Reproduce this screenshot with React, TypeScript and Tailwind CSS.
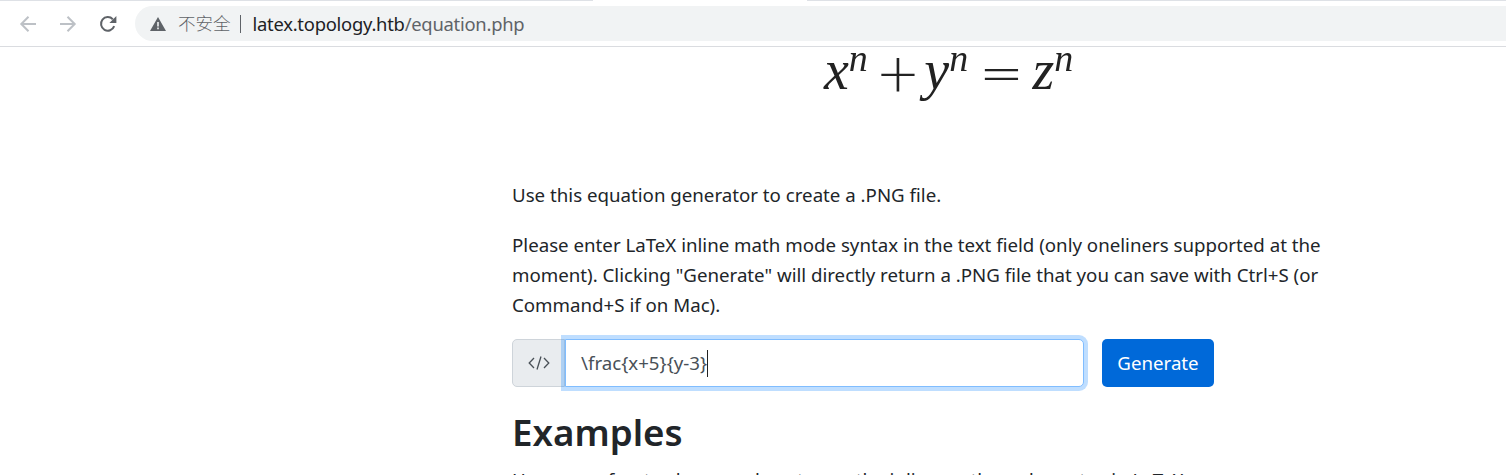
import React from "react";

const sans = "font-['Noto_Sans','Open_Sans',sans-serif]";

function Back() {
  return (
    <svg width="18" height="18" viewBox="0 0 18 18" fill="none" stroke="#bdc1c6" strokeWidth="2">
      <path d="M17 9H2.500M9.500 1.800 2.300 9l7.200 7.200" />
    </svg>
  );
}
function Forward() {
  return (
    <svg width="18" height="18" viewBox="0 0 18 18" fill="none" stroke="#bdc1c6" strokeWidth="2">
      <path d="M1 9h14.500M8.500 1.800 15.700 9l-7.200 7.200" />
    </svg>
  );
}
function Reload() {
  return (
    <svg width="18" height="18" viewBox="0 0 18 18" fill="none">
      <path d="M15.200 11.200A6.800 6.800 0 1 1 13.800 4.200" stroke="#5f6368" strokeWidth="2" />
      <path d="M17.400 1v7h-7z" fill="#5f6368" />
    </svg>
  );
}
function Warn() {
  return (
    <svg width="16" height="14" viewBox="0 0 16 14">
      <path fillRule="evenodd" d="M8 0 16 14H0ZM7.200 5v4.400h1.600V5Zm0 5.600v1.600h1.600v-1.600Z" fill="#5f6368" />
    </svg>
  );
}

function Sup({ children }: { children: string }) {
  return <i className="relative -top-[18px] text-[38px] leading-none">{children}</i>;
}

function Op({ children, className }: { children: string; className: string }) {
  return (
    <span className={`font-['DejaVu_Sans',sans-serif] font-extralight text-[53px] leading-none relative top-[3px] ${className}`}>
      {children}
    </span>
  );
}

export default function App() {
  return (
    <div className={`w-[1506px] h-[475px] overflow-hidden bg-white text-[#212529] ${sans}`}>
      <div className="h-[47px] border-b border-[#dadce0]">
        <div className="flex h-px">
          <div className="w-[593px] bg-[#dee1e6]" />
          <div className="w-[214px] bg-white" />
          <div className="flex-1 bg-[#dee1e6]" />
        </div>
        <div className="flex items-center h-[45px] pt-[5px] pb-[5px]">
          <div className="flex items-center gap-[22px] pl-[19px] w-[135px]">
            <Back />
            <Forward />
            <Reload />
          </div>
          <div className="flex-1 h-[35px] rounded-l-[18px] bg-[#f1f3f4] flex items-center pl-[15px] text-[18.400px] tracking-[-0.250px]">
            <Warn />
            <span className="ml-[12px] text-[#5f6368] font-['Noto_Sans_CJK_SC',sans-serif] text-[17.500px] font-light tracking-normal">不安全</span>
            <span className="ml-[9px] w-px h-[18px] bg-[#5f6368]" />
            <span className="ml-[12px] text-[#202124]">latex.topology.htb</span>
            <span className="text-[#5f6368]">/equation.php</span>
          </div>
        </div>
      </div>

      <main className="ml-[512px] w-[830px]">
        <div className="h-[59px] flex items-start">
          <div className="ml-[312px] -mt-[8px] font-['Liberation_Serif',serif] text-[56px] leading-[62px] whitespace-nowrap text-[#222] [filter:blur(0.3px)] flex items-baseline">
            <i>x</i><Sup>{"n"}</Sup>
            <Op className="ml-[8px]">+</Op>
            <i className="ml-[4px]">y</i><Sup>{"n"}</Sup>
            <Op className="ml-[11px]">=</Op>
            <i className="ml-[9px]">z</i><Sup>{"n"}</Sup>
          </div>
        </div>

        <div className="text-[18.700px] leading-[30px]">
          <p className="mt-[74px]">Use this equation generator to create a .PNG file.</p>
          <p className="mt-[20px] w-[830px]">
            Please enter LaTeX inline math mode syntax in the text field (only oneliners supported at the moment). Clicking "Generate" will directly return a .PNG file that you can save with Ctrl+S (or Command+S if on Mac).
          </p>
        </div>

        <div className="mt-[19px] flex items-start">
          <div className="w-[53px] h-[48px] bg-[#e9ecef] border border-[#ced4da] rounded-l-[5px] flex items-center justify-center text-[#495057]">
            <svg width="22" height="14" viewBox="0 0 22 14" fill="none" stroke="#495057" strokeWidth="1.300">
              <path d="M6 2 1.200 7 6 12M16 2l4.800 5-4.800 5M13 .5 9 13.500" />
            </svg>
          </div>
          <div className="w-[519px] h-[48px] bg-white border border-[#80bdff] rounded-r-[5px] shadow-[0_0_0_4px_rgba(0,123,255,0.25)] flex items-center pl-[15px] pt-[1px] text-[18.700px] text-[#495057] relative">
            <span>{"\\frac{x+5}{y-3}"}</span>
            <span className="w-px h-[27px] bg-[#222]" />
          </div>
          <button className="ml-[18px] w-[112px] h-[48px] pt-[1px] rounded-[5px] bg-[#0069d9] text-white text-[18.700px]">Generate</button>
        </div>

        <h2 className="mt-[22px] text-[36.700px] leading-[46px] font-semibold">Examples</h2>
        <p className="mt-[10px] text-[18.700px] leading-[30px] whitespace-nowrap">Here are a few to show you how to use the inline math mode syntax in LaTeX</p>
      </main>
    </div>
  );
}
